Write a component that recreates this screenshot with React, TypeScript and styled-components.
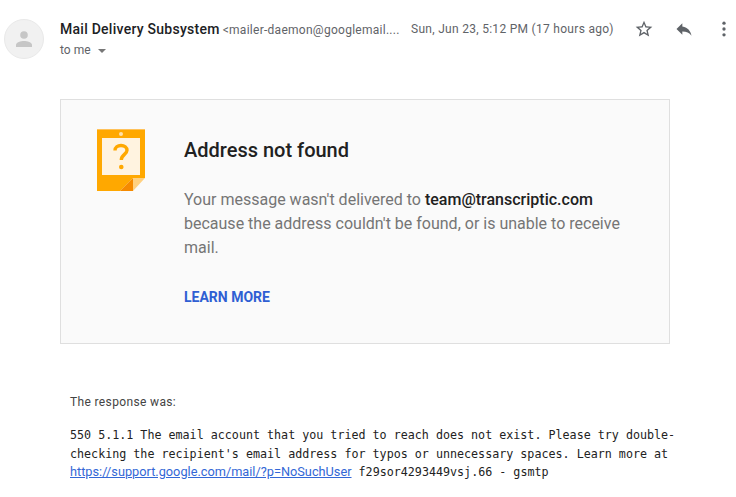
import React from "react";
import styled, { createGlobalStyle } from "styled-components";

const Global = createGlobalStyle`
  html, body { margin: 0; padding: 0; background: #fff; }
  body { font-family: Roboto, "Liberation Sans", sans-serif; overflow: hidden; }
`;

const Page = styled.div`
  width: 736px;
  height: 497px;
  overflow: hidden;
  box-sizing: border-box;
  padding-top: 19px;
`;

const Header = styled.header`
  display: flex;
  align-items: flex-start;
  height: 40px;
  padding-left: 4px;
`;

const Avatar = styled.div`
  width: 40px;
  height: 40px;
  border-radius: 50%;
  background: #f1f1f1;
  border: 1px solid #e9e9e9;
  box-sizing: border-box;
  display: flex;
  align-items: center;
  justify-content: center;
  flex: none;
`;

const Meta = styled.div`
  margin-left: 16px;
  width: 345px;
  flex: none;
  display: flex;
  flex-direction: column;
`;

const FromLine = styled.div`
  display: flex;
  align-items: baseline;
  white-space: nowrap;
  height: 20px;
  line-height: 20px;
`;

const Sender = styled.span`
  font-size: 14px;
  font-weight: 500;
  letter-spacing: 0.26px;
  color: #202124;
`;

const SenderAddress = styled.span`
  font-size: 12px;
  letter-spacing: 0.27px;
  color: #5f6368;
  margin-left: 3px;
`;

const ToLine = styled.div`
  display: flex;
  align-items: center;
  gap: 7px;
  height: 20px;
  margin-top: 1px;
  font-size: 12px;
  color: #5f6368;
`;

const Caret = styled.span`
  width: 0;
  height: 0;
  border-left: 4px solid transparent;
  border-right: 4px solid transparent;
  border-top: 4px solid #777;
  margin-top: 2px;
`;

const SentDate = styled.span`
  font-size: 12px;
  letter-spacing: 0.29px;
  line-height: 20px;
  color: #5f6368;
  margin-left: 6px;
  white-space: nowrap;
  flex: none;
`;

const Actions = styled.div`
  display: flex;
  align-items: center;
  height: 20px;
  margin-left: 20px;
`;

const IconSlot = styled.span<{ $w: number }>`
  display: flex;
  align-items: center;
  justify-content: center;
  width: ${(p) => p.$w}px;
  height: 20px;
`;

const Card = styled.section`
  margin: 40px 0 0 60px;
  width: 610px;
  height: 245px;
  box-sizing: border-box;
  background: #fafafa;
  border: 1px solid #dfdfdf;
  display: flex;
  padding: 29px 0 0 36px;
`;

const CardBody = styled.div`
  margin-left: 39px;
  width: 445px;
`;

const Title = styled.h2`
  margin: 7px 0 0;
  font-size: 20px;
  line-height: 28px;
  font-weight: 500;
  color: #212121;
`;

const Message = styled.p`
  margin: 24px 0 0;
  font-size: 16px;
  line-height: 24px;
  color: #757575;
`;

const Strong = styled.b`
  font-weight: 500;
  color: #212121;
`;

const LearnMore = styled.a`
  display: block;
  margin-top: 27px;
  font-size: 14px;
  line-height: 20px;
  font-weight: 700;
  color: #2f5fd3;
  text-decoration: none;
`;

const Response = styled.div`
  margin: 48px 0 0 70px;
`;

const ResponseLabel = styled.p`
  margin: 0;
  font-size: 12px;
  letter-spacing: 0.36px;
  line-height: 20px;
  color: #444;
`;

const Code = styled.p`
  margin: 14px 0 0;
  width: 620px;
  font-family: "DejaVu Sans Mono", "Liberation Mono", monospace;
  font-size: 11.7px;
  line-height: 18.5px;
  color: #222;
  white-space: pre;
`;

const CodeLink = styled.a`
  font-family: Roboto, sans-serif;
  font-size: 12.75px;
  color: #3367d6;
  text-decoration: underline;
`;

export default function App() {
  return (
    <Page>
      <Global />
      <Header>
        <Avatar>
          <svg width="18" height="20" viewBox="0 0 18 20">
            <circle cx="9" cy="6" r="3.8" fill="#c6c6c6" />
            <path d="M1 18v-2c0-2.600 4.800-4 8-4s8 1.400 8 4v2z" fill="#c6c6c6" />
          </svg>
        </Avatar>
        <Meta>
          <FromLine>
            <Sender>Mail Delivery Subsystem</Sender>
            <SenderAddress>&lt;mailer-daemon@googlemail....</SenderAddress>
          </FromLine>
          <ToLine>
            to me
            <Caret />
          </ToLine>
        </Meta>
        <SentDate>Sun, Jun 23, 5:12 PM (17 hours ago)</SentDate>
        <Actions>
          <IconSlot $w={20}>
            <svg width="20" height="20" viewBox="0 0 24 24" fill="#5f6368">
              <path d="M22 9.24l-7.19-.62L12 2 9.190 8.630 2 9.240l5.460 4.730L5.820 21 12 17.270 18.180 21l-1.630-7.030L22 9.240zM12 15.400l-3.760 2.270 1-4.280-3.320-2.880 4.380-.38L12 6.100l1.710 4.040 4.380.38-3.320 2.880 1 4.280L12 15.400z" />
            </svg>
          </IconSlot>
          <IconSlot $w={60}>
            <svg width="20" height="20" viewBox="0 0 24 24" fill="#5f6368">
              <path d="M10 9V5l-7 7 7 7v-4.100c5 0 8.500 1.600 11 5.100-1-5-4-10-11-11z" />
            </svg>
          </IconSlot>
          <IconSlot $w={20}>
            <svg width="20" height="20" viewBox="0 0 24 24" fill="#5f6368">
              <circle cx="12" cy="5" r="2" />
              <circle cx="12" cy="12" r="2" />
              <circle cx="12" cy="19" r="2" />
            </svg>
          </IconSlot>
        </Actions>
      </Header>
      <Card>
        <svg width="48" height="62" viewBox="0 0 48 62" style={{ flex: "none" }}>
          <path d="M0 0H48V49H36L23 62H0z" fill="#ffa800" />
          <rect width="48" height="1" fill="#ffc25a" />
          <path d="M23 62L36 49V62z" fill="#f58a00" />
          <path d="M36 49H48L36 62z" fill="#ffd080" />
          <rect x="5" y="9" width="38" height="37" fill="#fff3e0" />
          <circle cx="24" cy="5" r="2" fill="#ffe0a8" />
          <path d="M18 21.500c0-3 2.600-5 6-5s6 2 6 4.800c0 4-5.700 4.400-5.700 9.700" fill="none" stroke="#ffa800" strokeWidth="3.400" />
          <circle cx="24.300" cy="38" r="2.300" fill="#ffa800" />
        </svg>
        <CardBody>
          <Title>Address not found</Title>
          <Message>
            Your message wasn't delivered to <Strong>team@transcriptic.com</Strong> because the address couldn't be found, or is unable to receive mail.
          </Message>
          <LearnMore href="#">LEARN MORE</LearnMore>
        </CardBody>
      </Card>
      <Response>
        <ResponseLabel>The response was:</ResponseLabel>
        <Code>
          {"550 5.1.1 The email account that you tried to reach does not exist. Please try double-\nchecking the recipient's email address for typos or unnecessary spaces. Learn more at\n"}
          <CodeLink href="#">https://support.google.com/mail/?p=NoSuchUser</CodeLink>
          {" f29sor4293449vsj.66 - gsmtp"}
        </Code>
      </Response>
    </Page>
  );
}
